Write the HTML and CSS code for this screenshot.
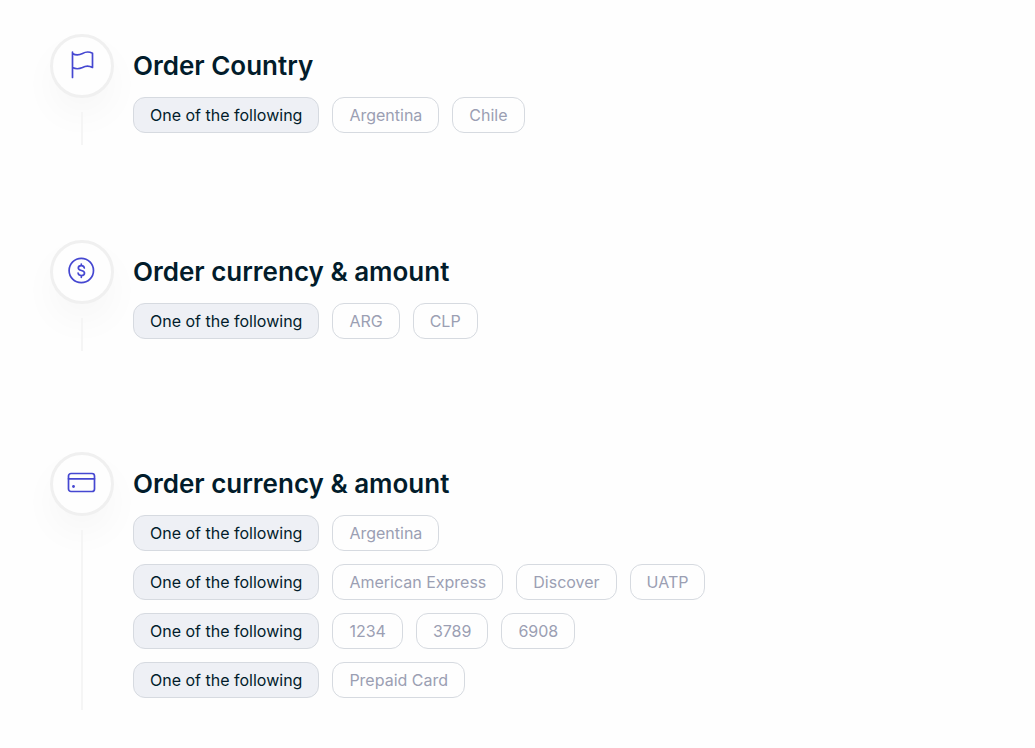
FILE: index.html
```html
<!DOCTYPE html>
<html lang="en">
<head>
<meta charset="utf-8">
<meta name="viewport" content="width=device-width, initial-scale=1">
<title>Order rules</title>
<link rel="stylesheet" href="styles.css">
</head>
<body>
<main class="rules">
  <section class="rule">
    <div class="marker">
      <span class="badge">
        <svg class="icon" viewBox="0 0 32 32" aria-hidden="true"><path d="M6.500 2v25.500M6.500 3.500c3 1.800 6.500 1.800 10 0 3.500-2 7-1.800 10-.2V17.500c-3.500-2-7-1.800-10 0-3.500 1.600-7 1.600-10 0"/></svg>
      </span>
      <span class="track"></span>
    </div>
    <div class="body">
      <h2 class="title">Order Country</h2>
      <div class="rows">
        <ul class="row"><li class="chip operator">One of the following</li><li class="chip">Argentina</li><li class="chip">Chile</li></ul>
      </div>
    </div>
  </section>
  <section class="rule">
    <div class="marker">
      <span class="badge">
        <svg class="icon" viewBox="0 0 32 32" aria-hidden="true"><circle cx="15.300" cy="14.500" r="12.200"/><path d="M18.300 12c-.2-1.500-1.400-2.400-3-2.400-1.800 0-3 .9-3 2.400 0 3.300 6.200 1.600 6.200 5 0 1.600-1.300 2.500-3.100 2.500s-3.100-.9-3.300-2.500M15.300 8v1.600M15.300 19.500v1.800"/></svg>
      </span>
      <span class="track"></span>
    </div>
    <div class="body">
      <h2 class="title">Order currency &amp; amount</h2>
      <div class="rows">
        <ul class="row"><li class="chip operator">One of the following</li><li class="chip">ARG</li><li class="chip">CLP</li></ul>
      </div>
    </div>
  </section>
  <section class="rule payment">
    <div class="marker">
      <span class="badge">
        <svg class="icon" viewBox="0 0 32 32" aria-hidden="true"><rect x="2.500" y="5.500" width="26" height="18" rx="2.500"/><path d="M2.500 10.800h26"/><circle class="dot" cx="7.500" cy="18.500" r="1.400"/></svg>
      </span>
      <span class="track"></span>
    </div>
    <div class="body">
      <h2 class="title">Order currency &amp; amount</h2>
      <div class="rows">
        <ul class="row"><li class="chip operator">One of the following</li><li class="chip">Argentina</li></ul>
        <ul class="row"><li class="chip operator">One of the following</li><li class="chip">American Express</li><li class="chip">Discover</li><li class="chip">UATP</li></ul>
        <ul class="row"><li class="chip operator">One of the following</li><li class="chip">1234</li><li class="chip">3789</li><li class="chip">6908</li></ul>
        <ul class="row"><li class="chip operator">One of the following</li><li class="chip">Prepaid Card</li></ul>
      </div>
    </div>
  </section>
</main>
</body>
</html>
```
FILE: styles.css
```css
* {
  box-sizing: border-box;
}

body {
  margin: 0;
  background: #fefefe;
  color: #021c2b;
  font-family: Inter, "Liberation Sans", sans-serif;
}

.rules {
  display: flex;
  flex-direction: column;
  gap: 95px;
  padding: 34px 50px 38px;
}

.rule {
  display: grid;
  grid-template-columns: 64px 1fr;
  column-gap: 19px;
}

.payment {
  padding-top: 6px;
}

.marker {
  display: flex;
  flex-direction: column;
  align-items: center;
  gap: 14px;
}

.badge {
  display: grid;
  place-items: center;
  width: 64px;
  height: 64px;
  border: 3px solid #f0f0f0;
  border-radius: 50%;
  background: #fefefe;
  box-shadow: 0 18px 36px rgba(0, 0, 0, 0.03);
}

.icon {
  width: 32px;
  height: 32px;
  fill: none;
  stroke: #4547d1;
  stroke-width: 1.7;
  stroke-linecap: round;
  stroke-linejoin: round;
}

.dot {
  fill: #4547d1;
  stroke: none;
}

.track {
  flex: 1;
  width: 2px;
  background: #f5f5f5;
}

.body {
  padding: 16px 0 12px;
}

.title {
  margin: 0 0 15px;
  font-size: 26px;
  line-height: 32px;
  font-weight: 600;
}

.rows {
  display: flex;
  flex-direction: column;
  gap: 13px;
}

.row {
  display: flex;
  flex-wrap: wrap;
  gap: 13px;
  margin: 0;
  padding: 0;
  list-style: none;
}

.chip {
  padding: 6px 16px;
  border: 1px solid #d6dae0;
  border-radius: 12px;
  color: #9b9fb3;
  font-size: 16px;
  line-height: 22px;
  font-weight: 400;
}

.operator {
  background: #eef0f5;
  color: #021c2b;
}
```
